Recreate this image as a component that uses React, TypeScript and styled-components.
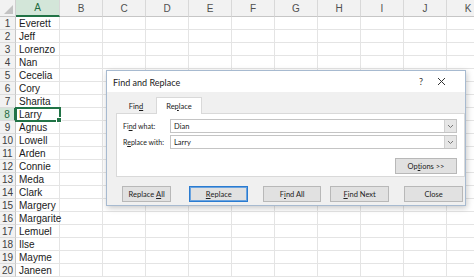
import styled, { createGlobalStyle } from "styled-components";

const GlobalStyle = createGlobalStyle`
  html, body {
    margin: 0;
    padding: 0;
    background: #ffffff;
  }
  body {
    font-family: "Liberation Sans", Arial, sans-serif;
  }
`;

const names = [
  "Everett",
  "Jeff",
  "Lorenzo",
  "Nan",
  "Cecelia",
  "Cory",
  "Sharita",
  "Larry",
  "Agnus",
  "Lowell",
  "Arden",
  "Connie",
  "Meda",
  "Clark",
  "Margery",
  "Margarite",
  "Lemuel",
  "Ilse",
  "Mayme",
  "Janeen",
];

const columns = ["A", "B", "C", "D", "E", "F", "G", "H", "I", "J", "K"];
const SELECTED_ROW = 8;

const Page = styled.div`
  position: relative;
  width: 474px;
  height: 278px;
  overflow: hidden;
  background: #fff;
`;

const Sheet = styled.div`
  display: grid;
  grid-template-columns: 16px 44px repeat(10, 43px);
  grid-auto-rows: 13px;
  grid-template-rows: 17px;
  width: 520px;
`;

const Corner = styled.div`
  position: relative;
  background: #f2f2f2;
  border-right: 1px solid #d0d0d0;
  border-bottom: 1px solid #c6c6c6;
  &::after {
    content: "";
    position: absolute;
    right: 2px;
    bottom: 2px;
    border-left: 9px solid transparent;
    border-bottom: 9px solid #c3c3c3;
  }
`;

const ColHead = styled.div<{ $active?: boolean }>`
  display: flex;
  align-items: center;
  justify-content: center;
  background: ${(p) => (p.$active ? "#d3e6d9" : "#f2f2f2")};
  color: ${(p) => (p.$active ? "#1e6b41" : "#505050")};
  border-right: 1px solid #d8d8d8;
  border-bottom: ${(p) => (p.$active ? "2px solid #217346" : "1px solid #c6c6c6")};
  font-size: 10px;
  box-sizing: border-box;
`;

const RowHead = styled.div<{ $active?: boolean }>`
  display: flex;
  align-items: center;
  justify-content: center;
  background: ${(p) => (p.$active ? "#d3e6d9" : "#f2f2f2")};
  color: ${(p) => (p.$active ? "#1e6b41" : "#404040")};
  border-right: ${(p) => (p.$active ? "2px solid #217346" : "1px solid #c6c6c6")};
  border-bottom: 1px solid #dcdcdc;
  font-size: 10px;
  box-sizing: border-box;
`;

const Cell = styled.div<{ $selected?: boolean }>`
  position: relative;
  display: flex;
  align-items: center;
  padding-left: 3px;
  border-right: 1px solid #e4e4e4;
  border-bottom: 1px solid #e4e4e4;
  font-size: 10px;
  color: #1a1a1a;
  white-space: nowrap;
  box-sizing: border-box;
  ${(p) =>
    p.$selected &&
    `
    outline: 2px solid #217346;
    outline-offset: -1px;
    z-index: 1;
    &::after {
      content: "";
      position: absolute;
      right: -3px;
      bottom: -3px;
      width: 4px;
      height: 4px;
      background: #217346;
      border: 1px solid #fff;
    }
  `}
`;

const Dialog = styled.div`
  position: absolute;
  left: 106px;
  top: 70px;
  width: 360px;
  height: 136px;
  box-sizing: border-box;
  border: 1px solid #a7bad0;
  background: #f0f0f0;
  box-shadow: 1px 2px 6px rgba(0, 0, 0, 0.22);
  font-family: Lato, "Open Sans", sans-serif;
  color: #1a1a1a;
  display: flex;
  flex-direction: column;
`;

const TitleBar = styled.div`
  display: flex;
  align-items: center;
  height: 21px;
  padding: 0 10px 0 6px;
  background: #ffffff;
  font-size: 9px;
`;

const Title = styled.div`
  flex: 1;
  padding-top: 2px;
`;

const TitleButton = styled.div<{ $w: number }>`
  width: ${(p) => p.$w}px;
  display: flex;
  justify-content: center;
  align-items: center;
  color: #333;
  font-size: 9px;
  svg {
    display: block;
  }
`;

const Body = styled.div`
  padding: 5px 2px 0 9px;
  display: flex;
  flex-direction: column;
`;

const Tabs = styled.div`
  display: flex;
  height: 16px;
`;

const Tab = styled.div<{ $active?: boolean; $w: number }>`
  width: ${(p) => p.$w}px;
  box-sizing: border-box;
  display: flex;
  align-items: center;
  justify-content: center;
  font-size: 7.5px;
  background: ${(p) => (p.$active ? "#ffffff" : "transparent")};
  border: 1px solid ${(p) => (p.$active ? "#d9d9d9" : "transparent")};
  border-bottom: none;
  margin-bottom: -1px;
  position: relative;
  z-index: 1;
`;

const Panel = styled.div`
  width: 349px;
  height: 64px;
  box-sizing: border-box;
  background: #ffffff;
  border: 1px solid #d9d9d9;
  padding: 5px 7px 0 6px;
  display: flex;
  flex-direction: column;
  gap: 2px;
`;

const FieldRow = styled.div`
  display: flex;
  align-items: center;
  height: 14px;
`;

const Label = styled.div`
  width: 47px;
  font-size: 7px;
  white-space: nowrap;
`;

const Combo = styled.div`
  flex: 1;
  height: 14px;
  box-sizing: border-box;
  border: 1px solid #c4c4c4;
  display: flex;
  align-items: center;
  font-size: 7.5px;
  padding-left: 3px;
`;

const ComboText = styled.span`
  flex: 1;
`;

const DropButton = styled.div`
  width: 11px;
  height: 12px;
  background: #e6e6e6;
  border-left: 1px solid #d0d0d0;
  display: flex;
  align-items: center;
  justify-content: center;
`;

const OptionsRow = styled.div`
  display: flex;
  justify-content: flex-end;
  margin-top: 7px;
`;

const Button = styled.div<{ $w: number; $ml?: number; $primary?: boolean }>`
  width: ${(p) => p.$w}px;
  height: 16px;
  margin-left: ${(p) => p.$ml ?? 0}px;
  box-sizing: border-box;
  background: #e1e1e1;
  border: 1px solid ${(p) => (p.$primary ? "#2a7bd0" : "#b8b8b8")};
  box-shadow: ${(p) => (p.$primary ? "inset 0 0 0 1px #6aa3df" : "none")};
  display: flex;
  align-items: center;
  justify-content: center;
  font-size: 7.5px;
  color: #222;
  white-space: pre;
`;

const ButtonBar = styled.div`
  display: flex;
  padding: 9px 0 0 6px;
`;

const Chevron = () => (
  <svg width="7" height="5" viewBox="0 0 7 5">
    <path d="M1 1 L3.5 3.5 L6 1" fill="none" stroke="#777" strokeWidth="1" />
  </svg>
);

export default function App() {
  return (
    <Page>
      <GlobalStyle />
      <Sheet>
        <Corner />
        {columns.map((c) => (
          <ColHead key={c} $active={c === "A"}>
            {c}
          </ColHead>
        ))}
        {names.map((name, i) => {
          const row = i + 1;
          return [
            <RowHead key={`r${row}`} $active={row === SELECTED_ROW}>
              {row}
            </RowHead>,
            ...columns.map((c) => (
              <Cell key={`${c}${row}`} $selected={c === "A" && row === SELECTED_ROW}>
                {c === "A" ? name : ""}
              </Cell>
            )),
          ];
        })}
      </Sheet>

      <Dialog>
        <TitleBar>
          <Title>Find and Replace</Title>
          <TitleButton $w={12}>?</TitleButton>
          <TitleButton $w={28}>
            <svg width="9" height="9" viewBox="0 0 9 9">
              <path d="M1 1 L8 8 M8 1 L1 8" stroke="#333" strokeWidth="1" />
            </svg>
          </TitleButton>
        </TitleBar>
        <Body>
          <Tabs>
            <Tab $w={40}>
              Fin<u>d</u>
            </Tab>
            <Tab $w={46} $active>
              Re<u>p</u>lace
            </Tab>
          </Tabs>
          <Panel>
            <FieldRow>
              <Label>
                Fi<u>n</u>d what:
              </Label>
              <Combo>
                <ComboText>Dian</ComboText>
                <DropButton>
                  <Chevron />
                </DropButton>
              </Combo>
            </FieldRow>
            <FieldRow>
              <Label>
                R<u>e</u>place with:
              </Label>
              <Combo>
                <ComboText>Larry</ComboText>
                <DropButton>
                  <Chevron />
                </DropButton>
              </Combo>
            </FieldRow>
            <OptionsRow>
              <Button $w={62}>
                Op<u>t</u>ions {">>"}
              </Button>
            </OptionsRow>
          </Panel>
          <ButtonBar>
            <Button $w={51}>
              {"Replace "}
              <u>A</u>ll
            </Button>
            <Button $w={61} $ml={18} $primary>
              <u>R</u>eplace
            </Button>
            <Button $w={60} $ml={15}>
              F<u>i</u>nd All
            </Button>
            <Button $w={61} $ml={9}>
              <u>F</u>ind Next
            </Button>
            <Button $w={61} $ml={15}>
              Close
            </Button>
          </ButtonBar>
        </Body>
      </Dialog>
    </Page>
  );
}
